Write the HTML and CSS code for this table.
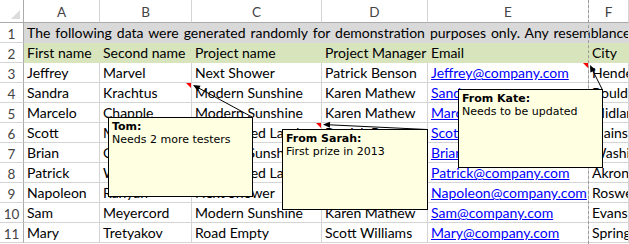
FILE: index.html
```html
<!DOCTYPE html>
<html>
<head>
<meta charset="utf-8">
<link rel="stylesheet" href="styles.css">
</head>
<body>
<div class="sheet">
  <div class="corner"><svg width="24" height="23" viewBox="0 0 24 23"><polygon points="20,10 20,19 11,19" fill="#dcdcdc"/></svg></div>
  <div class="colhead">A</div><div class="colhead">B</div><div class="colhead">C</div><div class="colhead">D</div><div class="colhead">E</div><div class="colhead">F</div>

  <div class="rowhead">1</div>
  <div class="cell banner">The following data were generated randomly for demonstration purposes only. Any resemblance to real persons is coincidental.</div>

  <div class="rowhead">2</div>
  <div class="cell head">First name</div><div class="cell head">Second name</div><div class="cell head">Project name</div><div class="cell head">Project Manager</div><div class="cell head">Email</div><div class="cell head">City</div>

  <div class="rowhead">3</div>
  <div class="cell">Jeffrey</div><div class="cell">Marvel</div><div class="cell">Next Shower</div><div class="cell">Patrick Benson</div><div class="cell note-mark"><span class="link">Jeffrey@company.com</span></div><div class="cell">Henderson</div>

  <div class="rowhead">4</div>
  <div class="cell">Sandra</div><div class="cell note-mark">Krachtus</div><div class="cell">Modern Sunshine</div><div class="cell">Karen Mathew</div><div class="cell"><span class="link">Sandra@company.com</span></div><div class="cell">Boulder</div>

  <div class="rowhead">5</div>
  <div class="cell">Marcelo</div><div class="cell">Chapple</div><div class="cell">Modern Sunshine</div><div class="cell">Karen Mathew</div><div class="cell"><span class="link">Marcelo@company.com</span></div><div class="cell">Midland</div>

  <div class="rowhead">6</div>
  <div class="cell">Scott</div><div class="cell">Miller</div><div class="cell note-mark">Abandoned Land</div><div class="cell">Patrick Benson</div><div class="cell"><span class="link">Scott@company.com</span></div><div class="cell">Plainsboro</div>

  <div class="rowhead">7</div>
  <div class="cell">Brian</div><div class="cell">Cooper</div><div class="cell">Modern Sunshine</div><div class="cell">Karen Mathew</div><div class="cell"><span class="link">Brian@company.com</span></div><div class="cell">Washington</div>

  <div class="rowhead">8</div>
  <div class="cell">Patrick</div><div class="cell">Weiss</div><div class="cell">Abandoned Land</div><div class="cell">Patrick Benson</div><div class="cell"><span class="link">Patrick@company.com</span></div><div class="cell">Akron</div>

  <div class="rowhead">9</div>
  <div class="cell">Napoleon</div><div class="cell">Ranyan</div><div class="cell">Next Shower</div><div class="cell">Patrick Benson</div><div class="cell"><span class="link">Napoleon@company.com</span></div><div class="cell">Roswell</div>

  <div class="rowhead">10</div>
  <div class="cell">Sam</div><div class="cell">Meyercord</div><div class="cell">Modern Sunshine</div><div class="cell">Karen Mathew</div><div class="cell"><span class="link">Sam@company.com</span></div><div class="cell">Evanston</div>

  <div class="rowhead">11</div>
  <div class="cell">Mary</div><div class="cell">Tretyakov</div><div class="cell">Road Empty</div><div class="cell">Scott Williams</div><div class="cell"><span class="link">Mary@company.com</span></div><div class="cell">Springfield</div>

  <div class="pagebreak"></div>

  <svg class="arrows" width="629" height="244" viewBox="0 0 629 244">
    <line x1="252" y1="117" x2="196" y2="86.6" stroke="#000" stroke-width="1"/>
    <polygon points="193,85 197.7,90.9 200.6,85.7" fill="#000"/>
    <line x1="427" y1="129.5" x2="327" y2="124.7" stroke="#000" stroke-width="1"/>
    <polygon points="323,124.5 329.9,127.8 330.1,121.8" fill="#000"/>
    <line x1="602" y1="89" x2="591.5" y2="68" stroke="#000" stroke-width="1"/>
    <polygon points="590,65 590.4,72.6 595.8,70" fill="#000"/>
  </svg>

  <div class="note note-tom"><div class="note-title">Tom:</div><div>Needs 2 more testers</div></div>
  <div class="note note-sarah"><div class="note-title">From Sarah:</div><div>First prize in 2013</div></div>
  <div class="note note-kate"><div class="note-title">From Kate:</div><div>Needs to be updated</div></div>
</div>
</body>
</html>
```
FILE: styles.css
```css
html, body {
  margin: 0;
  padding: 0;
  background: #fff;
}

.sheet {
  position: relative;
  width: 629px;
  height: 244px;
  overflow: hidden;
  display: grid;
  grid-template-columns: 24px 76px 92px 130px 106px 161px 40px;
  grid-template-rows: 23px repeat(11, 20px);
  font-family: Lato, "Liberation Sans", sans-serif;
  font-size: 14px;
  color: #000;
}

.corner {
  box-sizing: border-box;
  border-right: 1px solid #ababab;
  border-bottom: 1px solid #ababab;
  background: #fff;
}
.corner svg { display: block; }

.colhead {
  box-sizing: border-box;
  border-right: 1px solid #d4d4d4;
  border-bottom: 1px solid #ababab;
  text-align: center;
  font-size: 13.5px;
  line-height: 16px;
  padding-top: 4px;
  color: #444;
  background: #fff;
}

.rowhead {
  box-sizing: border-box;
  border-right: 1px solid #ababab;
  border-bottom: 1px solid #d4d4d4;
  text-align: center;
  font-size: 13.5px;
  line-height: 16px;
  padding-top: 3px;
  color: #444;
  background: #fff;
}

.cell {
  position: relative;
  box-sizing: border-box;
  border-right: 1px solid #d4d4d4;
  border-bottom: 1px solid #d4d4d4;
  padding: 2px 0 0 3px;
  line-height: 16px;
  white-space: nowrap;
  overflow: hidden;
}

.banner {
  grid-column: 2 / -1;
  background: #d9d9d9;
  border-color: #d9d9d9;
  overflow: hidden;
  word-spacing: 1.4px;
}

.head {
  background: #d8e4bc;
  border-color: #d8e4bc;
}

.link {
  color: #0000ff;
  text-decoration: underline;
}

.note-mark::after {
  content: "";
  position: absolute;
  top: 0;
  right: -1px;
  width: 0;
  height: 0;
  border-top: 6px solid #ff0000;
  border-left: 6px solid transparent;
}

.pagebreak {
  position: absolute;
  left: 588px;
  top: 0;
  height: 244px;
  border-left: 1px dashed #9a9a9a;
}

.arrows {
  position: absolute;
  left: 0;
  top: 0;
  pointer-events: none;
}

.note {
  position: absolute;
  box-sizing: border-box;
  background: #ffffe1;
  border: 1px solid #000;
  padding: 2px 3px;
  font-family: "DejaVu Sans", Verdana, sans-serif;
  font-size: 11px;
  line-height: 13px;
  color: #000;
}
.note-title { font-weight: bold; }

.note-tom { left: 108px; top: 117px; width: 145px; height: 80px; }
.note-sarah { left: 282px; top: 129px; width: 146px; height: 81px; }
.note-kate { left: 458px; top: 89px; width: 145px; height: 79px; }
```
